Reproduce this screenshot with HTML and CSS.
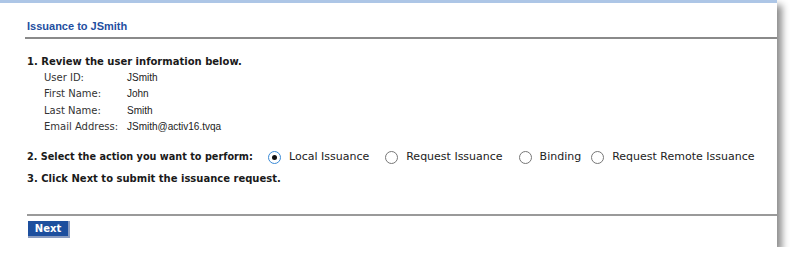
FILE: index.html
```html
<!DOCTYPE html>
<html lang="en">
<head>
    <meta charset="UTF-8">
    <title>Issuance to JSmith</title>
    <link rel="stylesheet" href="styles.css">
</head>
<body>
    <div class="panel">
        <div class="panel-title">Issuance to JSmith</div>
        <div class="panel-body">
            <div class="step">1. Review the user information below.</div>
            <table class="user-info">
                <tr><td class="label">User ID:</td><td class="value">JSmith</td></tr>
                <tr><td class="label">First Name:</td><td class="value">John</td></tr>
                <tr><td class="label">Last Name:</td><td class="value">Smith</td></tr>
                <tr><td class="label">Email Address:</td><td class="value">JSmith@activ16.tvqa</td></tr>
            </table>
            <div class="step action-row">
                <span class="action-label">2. Select the action you want to perform:</span>
                <label class="option"><span class="radio checked"></span>Local Issuance</label>
                <label class="option"><span class="radio"></span>Request Issuance</label>
                <label class="option tight"><span class="radio"></span>Binding</label>
                <label class="option"><span class="radio"></span>Request Remote Issuance</label>
            </div>
            <div class="step step-three">3. Click Next to submit the issuance request.</div>
        </div>
        <div class="panel-footer">
            <button class="next-button">Next</button>
        </div>
    </div>
</body>
</html>
```

FILE: styles.css
```css
body {
    margin: 0;
    background-color: #ffffff;
    font-family: "DejaVu Sans", Verdana, sans-serif;
}

.panel {
    width: 777px;
    height: 244px;
    background-color: #ffffff;
    border-top: 3px solid #adc6e6;
    box-shadow: 5px 5px 7px rgba(0, 0, 0, 0.45);
}

.panel-title {
    margin-left: 25px;
    padding: 17px 0 0 2px;
    height: 17px;
    border-bottom: 2px solid #8a8a8a;
    font-family: "Liberation Sans", Arial, sans-serif;
    font-size: 11px;
    font-weight: bold;
    color: #1f4f9f;
}

.panel-body {
    padding: 16px 0 0 27px;
    height: 159px;
}

.step {
    font-size: 10px;
    font-weight: bold;
    color: #1a1a1a;
    line-height: 14px;
    white-space: nowrap;
}

.user-info {
    border-collapse: collapse;
    margin: 0 0 0 17px;
}

.user-info td {
    padding: 0;
    height: 16.5px;
    vertical-align: middle;
}

.label {
    width: 83px;
    font-size: 10px;
    color: #333;
}

.value {
    font-family: "Liberation Sans", Arial, sans-serif;
    font-size: 10px;
    color: #222;
}

.action-row {
    display: flex;
    align-items: center;
    margin-top: 13px;
    height: 18px;
}

.action-label {
    width: 241px;
    font-size: 9.7px;
}

.option {
    display: flex;
    align-items: center;
    font-size: 11px;
    font-weight: normal;
    color: #222;
    margin-right: 16px;
    white-space: nowrap;
}

.option.tight {
    margin-right: 10px;
}

.radio {
    width: 11px;
    height: 11px;
    border: 1px solid #777;
    border-radius: 50%;
    margin-right: 8px;
    display: flex;
    justify-content: center;
    align-items: center;
    box-sizing: content-box;
}

.radio.checked {
    border-color: #3a8ad6;
}

.radio.checked::after {
    content: "";
    width: 5px;
    height: 5px;
    border-radius: 50%;
    background-color: #111;
}

.step-three {
    margin-top: 6px;
}

.panel-footer {
    margin-left: 27px;
    border-top: 2px solid #9a9a9a;
    padding: 5px 0 0 1px;
}

.next-button {
    display: block;
    background-color: #1d4f9e;
    color: #ffffff;
    border: none;
    border-right: 2px solid #8a9cc0;
    border-bottom: 2px solid #8a9cc0;
    font-family: "DejaVu Sans", Verdana, sans-serif;
    font-size: 10px;
    font-weight: bold;
    width: 42px;
    height: 17px;
    padding: 0;
}
```
